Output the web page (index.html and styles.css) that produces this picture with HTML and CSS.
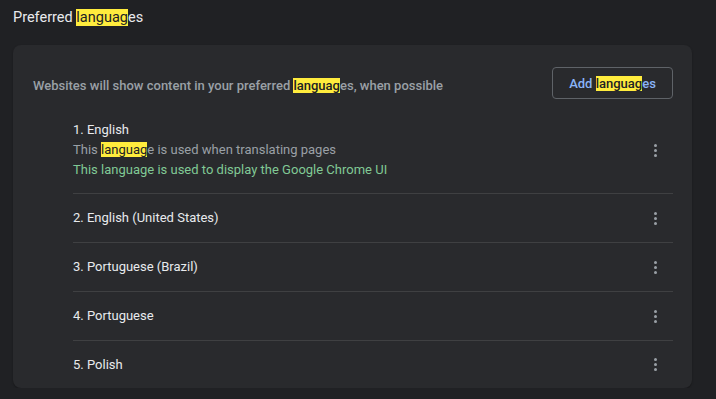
FILE: index.html
```html
<!DOCTYPE html>
<html>
<head>
<meta charset="utf-8">
<link rel="stylesheet" href="styles.css">
</head>
<body>
<div class="page">
  <h2 class="title">Preferred <mark>languag</mark>es</h2>
  <section class="card">
    <div class="header">
      <div class="desc">Websites will show content in your preferred <mark>languag</mark>es, when possible</div>
      <button class="add">Add <mark>languag</mark>es</button>
    </div>
    <ul class="list">
      <li class="row first">
        <div class="info">
          <div class="name">1. English</div>
          <div class="sub">This <mark>languag</mark>e is used when translating pages</div>
          <div class="ui">This language is used to display the Google Chrome UI</div>
        </div>
        <span class="more"><i></i><i></i><i></i></span>
      </li>
      <li class="row">
        <div class="name">2. English (United States)</div>
        <span class="more"><i></i><i></i><i></i></span>
      </li>
      <li class="row">
        <div class="name">3. Portuguese (Brazil)</div>
        <span class="more"><i></i><i></i><i></i></span>
      </li>
      <li class="row">
        <div class="name">4. Portuguese</div>
        <span class="more"><i></i><i></i><i></i></span>
      </li>
      <li class="row">
        <div class="name">5. Polish</div>
        <span class="more"><i></i><i></i><i></i></span>
      </li>
    </ul>
  </section>
</div>
</body>
</html>
```
FILE: styles.css
```css
html, body {
  margin: 0;
  padding: 0;
  background: #202124;
  font-family: Roboto, "Liberation Sans", sans-serif;
  font-size: 13px;
  color: #e8eaed;
}
.page {
  padding: 8px 24px 0 13px;
}
mark {
  background: #ffec3d;
  color: #202124;
}
.title {
  margin: 0;
  font-size: 14.5px;
  font-weight: 400;
  line-height: 20px;
  color: #e8eaed;
}
.card {
  margin-top: 17px;
  background: #292a2d;
  border-radius: 8px;
  padding: 22px 19px 0 20px;
  box-shadow: 0 1px 2px rgba(0,0,0,0.3);
}
.header {
  display: flex;
  align-items: center;
  justify-content: space-between;
}
.desc {
  color: #9aa0a6;
  font-weight: 500;
  line-height: 20px;
  padding-top: 6px;
}
.add {
  height: 32px;
  padding: 0 16px;
  background: transparent;
  border: 1px solid #5f6368;
  border-radius: 4px;
  color: #8ab4f8;
  font-family: inherit;
  font-size: 13px;
  font-weight: 500;
  width: 121px;
}
.list {
  list-style: none;
  margin: 8px 0 0 40px;
  padding: 0;
}
.row {
  display: flex;
  align-items: center;
  justify-content: space-between;
  height: 48px;
  border-top: 1px solid #3f4042;
}
.row.first {
  height: auto;
  padding: 13px 0;
  border-top: none;
}
.row:last-child { height: 47px; }
.name {
  line-height: 20px;
  color: #e8eaed;
}
.sub {
  line-height: 20px;
  color: #9aa0a6;
}
.ui {
  line-height: 20px;
  color: #81c995;
}
.more {
  width: 36px;
  display: flex;
  flex-direction: column;
  align-items: center;
  gap: 2px;
}
.more i {
  display: block;
  width: 3px;
  height: 3px;
  border-radius: 50%;
  background: #9aa0a6;
}
```
